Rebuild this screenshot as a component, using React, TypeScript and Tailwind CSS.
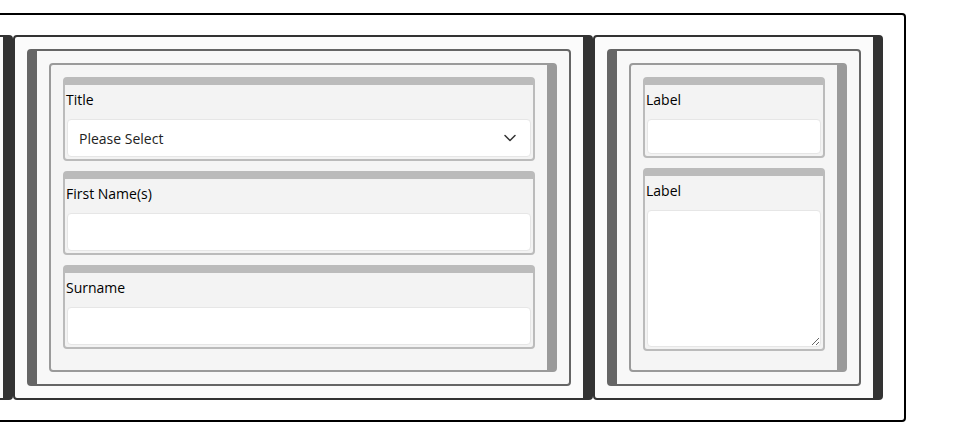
import React from "react";

function Card({ label, children }: { label: string; children: React.ReactNode }) {
  return (
    <div className="border-2 border-t-[8px] border-[#bbbbbb] rounded-[4px] bg-[#f3f3f3] mb-[10px] pb-[2px]">
      <div className="h-[34px] flex items-center pb-[4px] pl-[1px] text-[14px] text-black leading-none">{label}</div>
      {children}
    </div>
  );
}

function TextInput({ h }: { h: string }) {
  return (
    <div className="px-[2px]">
      <input
        className={`block w-full ${h} bg-white border border-[#e6e6e6] rounded-[4px] outline-none`}
        type="text"
      />
    </div>
  );
}

function Panel({ w, children }: { w: string; children?: React.ReactNode }) {
  return (
    <div className={`${w} h-[365px] shrink-0 flex flex-col border-2 border-r-[10px] border-[#333333] rounded-[4px] bg-[#fbfbfb] p-[12px]`}>
      <div className="flex-1 flex flex-col border-2 border-l-[10px] border-[#666666] rounded-[4px] bg-[#f8f8f8] p-[12px]">
        <div className="flex-1 flex flex-col border-2 border-r-[10px] border-[#9a9a9a] rounded-[4px] bg-[#f5f5f5] px-[12px] pt-[12px]">
          {children}
        </div>
      </div>
    </div>
  );
}

export default function App() {
  return (
    <div className="w-[964px] h-[432px] overflow-hidden bg-white pt-[13px] font-['Open_Sans','Noto_Sans',sans-serif]">
      <div className="ml-[-300px] w-[1206px] flex border-2 border-black rounded-[4px] bg-white pt-[20px] pb-[20px] pl-[20px] pr-[21px]">
        <Panel w="w-[291px]" />
        <Panel w="w-[580px]">
          <Card label="Title">
            <div className="px-[2px]">
              <div className="h-[38px] bg-white border border-[#e6e6e6] rounded-[4px] flex items-center justify-between pl-[11px] pr-[14px] text-[14px] text-[#222222]">
                <span>Please Select</span>
                <svg width="12" height="8" viewBox="0 0 12 8" fill="none">
                  <path d="M1 1.5L6 6.5L11 1.5" stroke="#333333" strokeWidth="1.5" strokeLinecap="round" strokeLinejoin="round" />
                </svg>
              </div>
            </div>
          </Card>
          <Card label="First Name(s)">
            <TextInput h="h-[38px]" />
          </Card>
          <Card label="Surname">
            <TextInput h="h-[38px]" />
          </Card>
        </Panel>
        <Panel w="w-[290px]">
          <Card label="Label">
            <TextInput h="h-[35px]" />
          </Card>
          <Card label="Label">
            <div className="px-[2px]">
              <textarea className="block w-full h-[137px] bg-white border border-[#e6e6e6] rounded-[4px] outline-none" />
            </div>
          </Card>
        </Panel>
      </div>
    </div>
  );
}
